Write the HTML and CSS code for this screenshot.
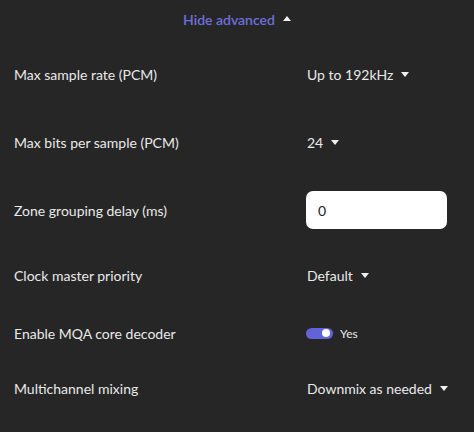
FILE: index.html
```html
<!DOCTYPE html>
<html>
<head>
<meta charset="utf-8">
<link rel="stylesheet" href="styles.css">
</head>
<body>
<div class="panel">
  <div class="toggle-adv">
    <span class="adv-link">Hide advanced</span>
    <span class="caret-up"></span>
  </div>
  <div class="settings">
    <div class="row r1">
      <div class="label">Max sample rate (PCM)</div>
      <div class="value"><span class="dropdown">Up to 192kHz<span class="caret"></span></span></div>
    </div>
    <div class="row r2">
      <div class="label">Max bits per sample (PCM)</div>
      <div class="value"><span class="dropdown">24<span class="caret"></span></span></div>
    </div>
    <div class="row r3">
      <div class="label">Zone grouping delay (ms)</div>
      <div class="value"><div class="input">0</div></div>
    </div>
    <div class="row r4">
      <div class="label">Clock master priority</div>
      <div class="value"><span class="dropdown">Default<span class="caret"></span></span></div>
    </div>
    <div class="row r5">
      <div class="label">Enable MQA core decoder</div>
      <div class="value"><span class="switch"><span class="knob"></span></span><span class="yes">Yes</span></div>
    </div>
    <div class="row r6">
      <div class="label">Multichannel mixing</div>
      <div class="value"><span class="dropdown">Downmix as needed<span class="caret"></span></span></div>
    </div>
  </div>
</div>
</body>
</html>
```
FILE: styles.css
```css
html, body {
  margin: 0;
  padding: 0;
  background: #262626;
}
body {
  width: 474px;
  height: 432px;
  overflow: hidden;
  font-family: Lato, "Noto Sans", sans-serif;
  color: #e9e9e9;
}
.panel {
  display: flex;
  flex-direction: column;
}
.toggle-adv {
  height: 38px;
  display: flex;
  align-items: center;
  justify-content: center;
  gap: 8px;
  margin-bottom: 3px;
}
.adv-link {
  color: #6f6fdc;
  font-size: 14px;
  font-weight: 600;
}
.caret-up {
  width: 0;
  height: 0;
  border-left: 4px solid transparent;
  border-right: 4px solid transparent;
  border-bottom: 5px solid #f0f0f0;
  margin-top: -2px;
}
.settings {
  display: flex;
  flex-direction: column;
  padding-left: 14px;
}
.row {
  display: grid;
  grid-template-columns: 292px 1fr;
  align-items: center;
}
.r1 { height: 67px; }
.r2 { height: 68px; }
.r3 { height: 68px; }
.r4 { height: 62px; }
.r5 { height: 54px; }
.r6 { height: 57px; }
.label {
  font-size: 14px;
}
.value {
  display: flex;
  align-items: center;
  font-size: 14px;
}
.dropdown {
  display: inline-flex;
  align-items: center;
  gap: 8px;
  padding-left: 1px;
}
.caret {
  width: 0;
  height: 0;
  border-left: 4px solid transparent;
  border-right: 4px solid transparent;
  border-top: 5px solid #f0f0f0;
}
.input {
  width: 129px;
  height: 38px;
  background: #ffffff;
  border-radius: 7px;
  color: #222;
  font-size: 14px;
  display: flex;
  align-items: center;
  padding-left: 12px;
}
.switch {
  position: relative;
  width: 27px;
  height: 11px;
  border-radius: 6px;
  background: #6363d8;
  display: inline-block;
}
.knob {
  position: absolute;
  right: 3px;
  top: 1.5px;
  width: 8px;
  height: 8px;
  border-radius: 50%;
  background: #ffffff;
}
.yes {
  font-size: 12px;
  margin-left: 7px;
}
```
